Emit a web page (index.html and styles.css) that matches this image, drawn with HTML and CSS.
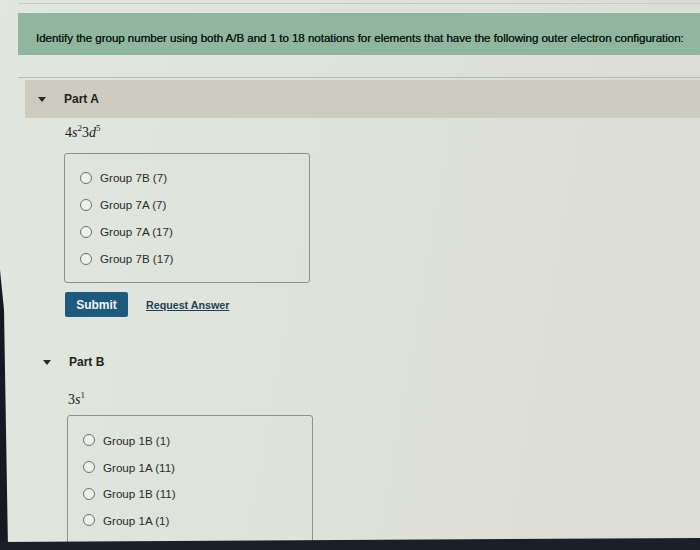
FILE: index.html
```html
<!DOCTYPE html>
<html>
<head>
<meta charset="utf-8">
<link rel="stylesheet" href="styles.css">
</head>
<body>
<div class="screen">
  <div class="top"></div>
  <div class="prompt">Identify the group number using both A/B and 1 to 18 notations for elements that have the following outer electron configuration:</div>
  <div class="divider"></div>

  <section class="part part-a">
    <div class="part-head">
      <span class="caret"></span>
      <span class="part-title">Part A</span>
    </div>
    <div class="part-body">
      <div class="formula">4<i>s</i><sup>2</sup>3<i>d</i><sup>5</sup></div>
      <div class="choices">
        <label class="choice"><span class="radio"></span>Group 7B (7)</label>
        <label class="choice"><span class="radio"></span>Group 7A (7)</label>
        <label class="choice"><span class="radio"></span>Group 7A (17)</label>
        <label class="choice"><span class="radio"></span>Group 7B (17)</label>
      </div>
      <div class="actions">
        <button class="submit">Submit</button>
        <a class="request">Request Answer</a>
      </div>
    </div>
  </section>

  <section class="part part-b">
    <div class="part-head">
      <span class="caret"></span>
      <span class="part-title">Part B</span>
    </div>
    <div class="part-body">
      <div class="formula">3<i>s</i><sup>1</sup></div>
      <div class="choices">
        <label class="choice"><span class="radio"></span>Group 1B (1)</label>
        <label class="choice"><span class="radio"></span>Group 1A (11)</label>
        <label class="choice"><span class="radio"></span>Group 1B (11)</label>
        <label class="choice"><span class="radio"></span>Group 1A (1)</label>
      </div>
    </div>
  </section>

  <div class="bezel-left"></div>
  <div class="bezel-bottom"></div>
</div>
</body>
</html>
```

FILE: styles.css
```css
html, body {
  margin: 0;
  padding: 0;
}
body {
  width: 700px;
  height: 550px;
  overflow: hidden;
  background: linear-gradient(100deg, #e1e6df 0%, #dfe3dc 40%, #dcddd4 100%);
  font-family: "Liberation Sans", Arial, sans-serif;
  color: #1e1f1f;
}
.screen {
  position: relative;
  width: 700px;
  height: 550px;
  overflow: hidden;
}
.top {
  height: 3px;
  margin-left: 18px;
  border-bottom: 1px solid #c6c9c3;
  margin-bottom: 9px;
}
.prompt {
  margin-left: 18px;
  height: 42px;
  box-sizing: border-box;
  padding-left: 18px;
  padding-top: 6px;
  display: flex;
  align-items: center;
  background: #8fb7a0;
  font-size: 11.6px;
  letter-spacing: -0.05px;
  white-space: nowrap;
  color: #111a15;
  text-shadow: 0 0 0.4px #111a15;
}
.divider {
  margin-top: 22px;
  margin-left: 18px;
  border-top: 1px solid #b7bab2;
}
.part-head {
  height: 38px;
  display: flex;
  align-items: center;
}
.part-a .part-head {
  margin-top: 2px;
  margin-left: 25px;
  padding-left: 13px;
  background: #cccdc0;
}
.part-b .part-head {
  margin-top: 26px;
  margin-left: 25px;
  padding-left: 18px;
}
.caret {
  width: 0;
  height: 0;
  border-left: 4px solid transparent;
  border-right: 4px solid transparent;
  border-top: 5px solid #2a2c2c;
  margin-right: 18px;
}
.part-title {
  font-size: 12px;
  font-weight: bold;
  color: #222;
}
.part-a .part-body {
  padding-left: 64px;
}
.part-b .part-body {
  padding-left: 67px;
}
.formula {
  font-family: "Liberation Serif", "Times New Roman", serif;
  font-size: 14px;
  line-height: 14px;
  padding-top: 8px;
  padding-left: 1px;
  color: #1a1a1a;
}
.part-b .formula {
  padding-top: 12px;
}
.formula sup {
  font-size: 9px;
  vertical-align: 6px;
  line-height: 0;
}
.choices {
  margin-top: 13px;
  width: 246px;
  box-sizing: border-box;
  border: 1px solid #8f928c;
  border-radius: 3px;
  padding: 10px 0 10px 15px;
  display: flex;
  flex-direction: column;
}
.part-b .choices {
  margin-top: 8px;
  padding-top: 11px;
  height: 140px;
}
.choice {
  height: 27px;
  display: flex;
  align-items: center;
  font-size: 11.6px;
  color: #2a2b2b;
}
.part-b .choice {
  height: 26.7px;
}
.radio {
  width: 10px;
  height: 10px;
  border: 1px solid #6f726f;
  border-radius: 50%;
  background: #eef0ec;
  margin-right: 8px;
  flex: none;
}
.actions {
  margin-top: 9px;
  display: flex;
  align-items: center;
}
.submit {
  width: 63px;
  height: 25px;
  margin-left: 1px;
  border: none;
  border-radius: 2px;
  background: #1e5a7b;
  color: #f2f5f6;
  font-family: "Liberation Sans", Arial, sans-serif;
  font-size: 12px;
  font-weight: bold;
  padding: 0;
}
.request {
  margin-left: 18px;
  font-size: 10.7px;
  font-weight: bold;
  color: #1f3f55;
  text-decoration: underline;
}
.bezel-left {
  position: absolute;
  left: 0;
  top: 270px;
  width: 10px;
  height: 280px;
  background: #151a22;
  clip-path: polygon(0 0, 4px 40px, 8px 280px, 0 280px);
}
.bezel-bottom {
  position: absolute;
  left: 0;
  right: 0;
  bottom: 0;
  height: 12px;
  background: #1a1f29;
  clip-path: polygon(0 4px, 100% 0, 100% 100%, 0 100%);
}
```
